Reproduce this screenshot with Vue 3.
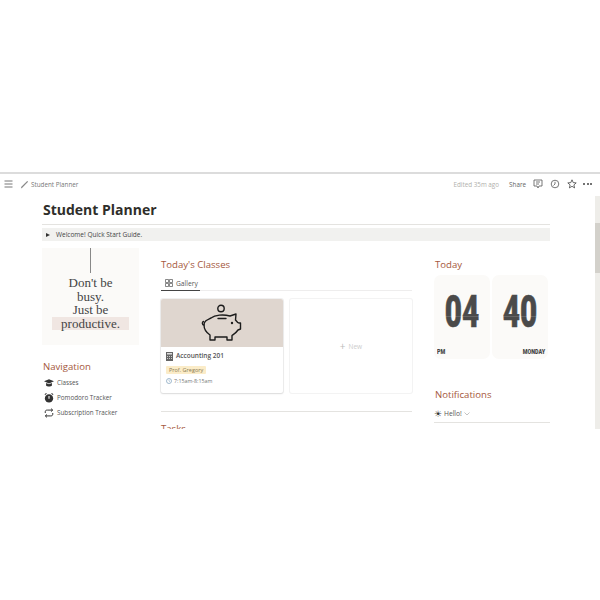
<template>
  <div class="shot">
    <div class="app">
      <header class="topbar">
        <svg class="menu" width="9" height="8" viewBox="0 0 9 8"><path d="M.5 1h8M.5 4h8M.5 7h8" stroke="#777" stroke-width="1" fill="none"/></svg>
        <svg class="pencil" width="9" height="9" viewBox="0 0 10 10"><path d="M1 9.500 L1.500 7.500 L8 1 L9 2 L2.500 8.500 Z" fill="#888"/></svg>
        <span class="crumb">Student Planner</span>
        <span class="spacer"></span>
        <span class="edited">Edited 35m ago</span>
        <span class="share">Share</span>
        <svg width="10" height="10" viewBox="0 0 10 10" class="tool"><path d="M1 1h8v6H6L5 9 4 7H1z M3 3h4M3 5h3" stroke="#555" stroke-width=".8" fill="none"/></svg>
        <svg width="10" height="10" viewBox="0 0 10 10" class="tool"><circle cx="5" cy="5" r="3.800" stroke="#555" stroke-width=".8" fill="none"/><path d="M5 2.800V5L3.500 6.500" stroke="#555" stroke-width=".8" fill="none"/></svg>
        <svg width="10" height="10" viewBox="0 0 10 10" class="tool star"><path d="M5 .8l1.200 2.800 3 .3-2.300 2 .7 3L5 7.300 2.400 8.900l.7-3-2.300-2 3-.3z" stroke="#444" stroke-width=".8" fill="none"/></svg>
        <span class="dots"><i></i><i></i><i></i></span>
      </header>

      <div class="body">
        <main class="page">
          <h1>Student Planner</h1>
          <div class="rule"></div>
          <div class="toggle">
            <span class="tri"></span>
            <span>Welcome! Quick Start Guide.</span>
          </div>

          <div class="columns">
            <section class="left">
              <div class="quote">
                <span class="quote-line"></span>
                <p>Don't be<br>busy.<br>Just be</p>
                <p class="mark">productive.</p>
              </div>
              <h2 class="nav-title">Navigation</h2>
              <a v-for="link in links" :key="link.name" class="nav-link">
                <svg width="10" height="10" viewBox="0 0 12 12" v-html="link.icon"></svg>
                <span>{{ link.name }}</span>
              </a>
            </section>

            <section class="middle">
              <h2>Today's Classes</h2>
              <div class="tabs">
                <div class="tab">
                  <svg width="8" height="8" viewBox="0 0 8 8"><path d="M.5.5h3v3h-3zM4.500.5h3v3h-3zM.5 4.500h3v3h-3zM4.500 4.500h3v3h-3z" stroke="#555" stroke-width=".7" fill="none"/></svg>
                  Gallery
                </div>
              </div>
              <div class="gallery">
                <article class="card">
                  <div class="cover">
                    <svg width="42" height="38" viewBox="0 0 42 38" fill="none" stroke="#1c1c1c" stroke-width="1.400" stroke-linejoin="round" stroke-linecap="round">
                      <circle cx="20" cy="4.500" r="3.200"/>
                      <path d="M10 14 C14 11 22 10 29 12 L35 10 L34.500 16 C36 18 37 19 38 19 L39.500 19 L39.500 25 L37 26 C35 29 33 30 31 31.500 L31 36 L26 36 L26 33 L14 33 L14 36 L9 36 L9 31 C6 29 3 25 3 21 C3 17 6 16 10 14 Z"/>
                      <path d="M3 21 C1 21 .8 18 2.500 17.500"/>
                      <path d="M17 14.500 H25"/>
                      <circle cx="31" cy="19" r=".5" fill="#1c1c1c"/>
                    </svg>
                  </div>
                  <div class="card-body">
                    <div class="card-title">
                      <svg width="7" height="9" viewBox="0 0 7 9"><path d="M0 0h7v9H0z" fill="#666"/><path d="M1 1h5v1.500H1z" fill="#ddd"/><path d="M1 4h1v1H1zM3 4h1v1H3zM5 4h1v1H5zM1 6h1v1H1zM3 6h1v1H3zM5 6h1v1H5z" fill="#ccc"/></svg>
                      Accounting 201
                    </div>
                    <span class="tag">Prof. Gregory</span>
                    <div class="time">
                      <svg width="6" height="6" viewBox="0 0 6 6"><circle cx="3" cy="3" r="2.500" stroke="#7a9cb8" stroke-width=".7" fill="none"/><path d="M3 1.500V3l1 .7" stroke="#7a9cb8" stroke-width=".5" fill="none"/></svg>
                      7:15am-8:15am
                    </div>
                  </div>
                </article>
                <div class="new-card"><span class="plus">+</span> New</div>
              </div>
              <div class="rule mid-rule"></div>
              <h2 class="cut">Tasks</h2>
            </section>

            <section class="right">
              <h2>Today</h2>
              <div class="clock">
                <div v-for="flip in flips" :key="flip.num" class="flip">
                  <div class="num"><span>{{ flip.num }}</span></div>
                  <div class="flip-label" :class="{ end: flip.end }"><span>{{ flip.label }}</span></div>
                </div>
              </div>
              <h2 class="notif">Notifications</h2>
              <div class="hello">
                <span class="sun">☀</span> Hello!
                <svg width="6" height="4" viewBox="0 0 6 4"><path d="M.5.5 3 3 5.500.5" stroke="#aaa" stroke-width=".7" fill="none"/></svg>
              </div>
              <div class="rule"></div>
            </section>
          </div>
        </main>
        <div class="scrollbar"><div class="thumb"></div></div>
      </div>
    </div>
  </div>
</template>

<script setup>
const links = [
  { name: "Classes", icon: '<path d="M0 4l6-2.500L12 4 6 6.500z" fill="#333"/><path d="M2.500 6v3c1 1.500 6 1.500 7 0V6L6 7.500z" fill="#333"/>' },
  { name: "Pomodoro Tracker", icon: '<circle cx="6" cy="6.500" r="5" fill="#333"/><path d="M6 3.500v3.500" stroke="#fff" stroke-width="1.300"/><path d="M1 2l2-1.500M11 2L9 .5" stroke="#333" stroke-width="1.300"/>' },
  { name: "Subscription Tracker", icon: '<path d="M1.500 6V4.500C1.500 3 2.500 2.500 4 2.500h6M8.500.8 10.500 2.500 8.500 4.200M10.500 6v1.500c0 1.500-1 2-2.500 2H2M3.500 7.800 1.500 9.500l2 1.700" stroke="#333" stroke-width="1.200" fill="none"/>' },
]

const flips = [
  { num: "04", label: "PM" },
  { num: "40", label: "MONDAY", end: true },
]
</script>

<style>
html, body { background: #fff; }
</style>

<style scoped>
.shot {
  width: 600px;
  height: 600px;
  background: #fff;
  padding-top: 172px;
  box-sizing: border-box;
  overflow: hidden;
  font-family: "Open Sans", "Noto Sans", sans-serif;
  color: #37352f;
}

.app {
  height: 257px;
  border-top: 2px solid #dcdcdc;
  box-sizing: border-box;
  display: flex;
  flex-direction: column;
  overflow: hidden;
}

.topbar {
  height: 20px;
  flex: none;
  display: flex;
  align-items: center;
  padding: 0 8px 0 4px;
  font-size: 6.300px;
}

.menu { margin-right: 7px; }
.crumb { color: #777; margin-left: 2px; }
.spacer { flex: 1; }
.edited { color: #b0b0ac; margin-right: 10px; }
.share { color: #666; margin-right: 7px; }
.tool { margin-right: 7px; }
.tool.star { margin-right: 5px; }

.dots { display: flex; gap: 1.500px; margin-left: 1px; }
.dots i { width: 2px; height: 2px; border-radius: 50%; background: #444; }

.body {
  flex: 1;
  display: flex;
  min-height: 0;
}

.page {
  flex: 1;
  padding: 0 45px 0 42px;
  min-width: 0;
}

h1 {
  margin: 4px 0 0 1px;
  font-size: 14px;
  line-height: 24px;
  font-weight: 700;
  color: #2f2e2a;
}

.rule { height: 1px; background: #e4e3e0; }
.page > .rule { margin-top: 2px; }

.toggle {
  margin-top: 3px;
  height: 13px;
  background: #f1f1ef;
  display: flex;
  align-items: center;
  gap: 6px;
  padding-left: 4px;
  font-size: 6.500px;
  color: #444;
}

.tri {
  width: 0;
  height: 0;
  border-left: 4px solid #333;
  border-top: 2px solid transparent;
  border-bottom: 2px solid transparent;
}

.columns {
  display: grid;
  grid-template-columns: 97px 251px 116px;
  column-gap: 22px;
  margin-top: 7px;
}

h2 {
  margin: 0;
  font-size: 9.600px;
  line-height: 14px;
  font-weight: 500;
  color: #a5583c;
}

.quote {
  position: relative;
  height: 97px;
  background: #fbfaf8;
  font-family: "Liberation Serif", serif;
  font-size: 13px;
  line-height: 13.500px;
  color: #444;
  text-align: center;
  padding-top: 28px;
  box-sizing: border-box;
}

.quote-line {
  position: absolute;
  left: 48px;
  top: 0;
  width: 1px;
  height: 25px;
  background: #888;
}

.quote p { margin: 0; }

.quote .mark {
  margin: 0 10px;
  background: #f0e6e2;
}

.nav-title { margin: 15px 0 0 1px; }

.nav-link {
  display: flex;
  align-items: center;
  gap: 3px;
  height: 15px;
  padding-left: 2px;
  font-size: 6.300px;
  color: #555;
}

.nav-title + .nav-link { margin-top: 1px; }

.middle h2 { margin-top: 10px; }

.tabs {
  display: flex;
  margin-top: 4px;
  border-bottom: 1px solid #eeeded;
  height: 14px;
}

.tab {
  display: flex;
  align-items: center;
  gap: 3px;
  height: 15px;
  width: 39px;
  padding-left: 4px;
  box-sizing: border-box;
  font-size: 6.700px;
  color: #555;
  border-bottom: 1px solid #444;
}

.gallery {
  display: grid;
  grid-template-columns: 122px 122px;
  column-gap: 7px;
  margin-top: 8px;
}

.card {
  height: 94px;
  border-radius: 2px;
  box-shadow: 0 0 0 1px rgba(15, 15, 15, .06), 0 1px 2px rgba(15, 15, 15, .1);
  overflow: hidden;
}

.cover {
  height: 48px;
  background: #dfd6cf;
  display: flex;
  align-items: center;
  justify-content: center;
}

.card-body { padding: 4px 5px; }

.card-title {
  display: flex;
  align-items: center;
  gap: 3px;
  font-size: 6.500px;
  font-weight: 600;
  color: #555;
  line-height: 10px;
}

.tag {
  display: block;
  width: fit-content;
  margin-top: 5px;
  padding: 0 3px;
  background: #fbecc8;
  color: #8a7a55;
  font-size: 5.500px;
  line-height: 8px;
  border-radius: 1px;
}

.time {
  display: flex;
  align-items: center;
  gap: 2px;
  margin-top: 3px;
  font-size: 5.300px;
  line-height: 8px;
  color: #777;
}

.new-card {
  height: 94px;
  border-radius: 2px;
  box-shadow: 0 0 0 1px rgba(15, 15, 15, .05);
  display: flex;
  align-items: center;
  justify-content: center;
  gap: 3px;
  font-size: 6.500px;
  color: #ccc;
}

.plus { font-size: 10px; color: #bbb; line-height: 8px; }

.mid-rule { margin-top: 18px; }
.middle .cut { margin-top: 10px; }

.right h2 { margin-left: 1px; }
.right h2:first-child { margin-top: 10px; }

.clock {
  display: flex;
  gap: 2px;
  margin-top: 3px;
}

.flip {
  width: 56px;
  height: 84px;
  border-radius: 7px;
  background: #fbfaf8;
  display: flex;
  flex-direction: column;
  box-sizing: border-box;
}

.num {
  position: relative;
  flex: 1;
  display: flex;
  align-items: center;
  justify-content: center;
  padding-top: 2px;
  font-family: Roboto, sans-serif;
  font-weight: 900;
  font-size: 45px;
  line-height: 50px;
  color: #4a4a4a;
}

.num span {
  display: inline-block;
  transform: scaleX(.66);
  -webkit-text-stroke: .6px #4a4a4a;
}

.num::after {
  content: "";
  position: absolute;
  left: 8px;
  right: 8px;
  top: 41px;
  height: 1px;
  background: rgba(255, 255, 255, .15);
}

.flip-label {
  height: 12px;
  padding: 0 3px;
  font-family: Roboto, sans-serif;
  font-weight: 900;
  font-size: 7.500px;
  line-height: 9px;
  color: #444;
}

.flip-label.end { text-align: right; }
.flip-label span { display: inline-block; transform: scaleX(.72); transform-origin: left; }
.flip-label.end span { transform-origin: right; }

.notif { margin-top: 29px; }

.hello {
  display: flex;
  align-items: center;
  gap: 2px;
  height: 15px;
  margin-top: 4px;
  font-size: 6.700px;
  color: #555;
}

.sun { font-size: 9px; color: #333; line-height: 10px; }
.right > .rule { margin-top: 1px; }

.scrollbar {
  width: 5px;
  flex: none;
  background: #eeede9;
  padding-top: 27px;
  box-sizing: border-box;
  margin-top: 2px;
}

.thumb { height: 50px; background: #d3d1cb; }
</style>
